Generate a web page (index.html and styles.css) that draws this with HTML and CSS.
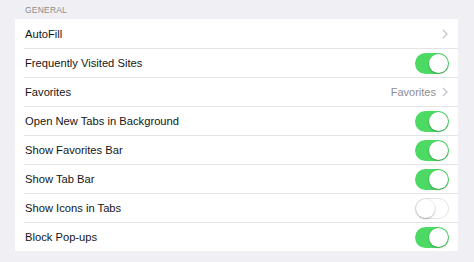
FILE: index.html
```html
<!DOCTYPE html>
<html>
<head>
<meta charset="utf-8">
<link rel="stylesheet" href="styles.css">
</head>
<body>
<div class="page">
  <div class="section-header">GENERAL</div>
  <div class="card">
    <div class="row"><span class="label">AutoFill</span><span class="accessory"><svg class="chev" width="6" height="10" viewBox="0 0 6 10"><polyline points="1,1 5,5 1,9" fill="none" stroke="#c4c4c9" stroke-width="1.3"/></svg></span></div>
    <div class="row"><span class="label">Frequently Visited Sites</span><span class="toggle on"><span class="knob"></span></span></div>
    <div class="row"><span class="label">Favorites</span><span class="accessory"><span class="value">Favorites</span><svg class="chev" width="6" height="10" viewBox="0 0 6 10"><polyline points="1,1 5,5 1,9" fill="none" stroke="#c4c4c9" stroke-width="1.3"/></svg></span></div>
    <div class="row"><span class="label">Open New Tabs in Background</span><span class="toggle on"><span class="knob"></span></span></div>
    <div class="row"><span class="label">Show Favorites Bar</span><span class="toggle on"><span class="knob"></span></span></div>
    <div class="row"><span class="label">Show Tab Bar</span><span class="toggle on"><span class="knob"></span></span></div>
    <div class="row"><span class="label">Show Icons in Tabs</span><span class="toggle off"><span class="knob"></span></span></div>
    <div class="row"><span class="label">Block Pop-ups</span><span class="toggle on"><span class="knob"></span></span></div>
  </div>
</div>
</body>
</html>
```
FILE: styles.css
```css
html, body {
  margin: 0;
  padding: 0;
  background: #efeff4;
}
body {
  font-family: "Liberation Sans", Arial, sans-serif;
  width: 474px;
  height: 262px;
  overflow: hidden;
}
.page {
  display: flex;
  flex-direction: column;
}
.section-header {
  height: 19px;
  box-sizing: border-box;
  padding: 5px 0 0 25px;
  font-size: 8.5px;
  line-height: 10px;
  color: #8d8d92;
  letter-spacing: 0.2px;
}
.card {
  background: #ffffff;
  margin: 0 16px 0 15px;
  display: flex;
  flex-direction: column;
}
.row {
  box-sizing: border-box;
  height: 29px;
  margin-left: 9px;
  padding: 0 9px 0 1px;
  display: flex;
  align-items: center;
  justify-content: space-between;
  border-top: 1px solid #e3e3e8;
}
.row:first-child {
  border-top: none;
}
.label {
  font-size: 11.2px;
  color: #151515;
}
.accessory {
  display: flex;
  align-items: center;
  gap: 6px;
}
.value {
  font-size: 11px;
  color: #8e8e93;
}
.chev {
  display: block;
  margin-right: 1px;
}
.toggle {
  position: relative;
  width: 34px;
  height: 21px;
  border-radius: 11px;
  box-sizing: border-box;
}
.toggle.on {
  background: #4cd964;
}
.toggle.off {
  background: #ffffff;
  border: 1px solid #e3e3e6;
}
.knob {
  position: absolute;
  top: 1px;
  width: 19px;
  height: 19px;
  border-radius: 50%;
  background: #ffffff;
  box-shadow: 0 1px 2px rgba(0,0,0,0.25), 0 0 0 0.5px rgba(0,0,0,0.08);
}
.toggle.on .knob {
  right: 1px;
}
.toggle.off .knob {
  top: 0;
  left: 0;
}
```
